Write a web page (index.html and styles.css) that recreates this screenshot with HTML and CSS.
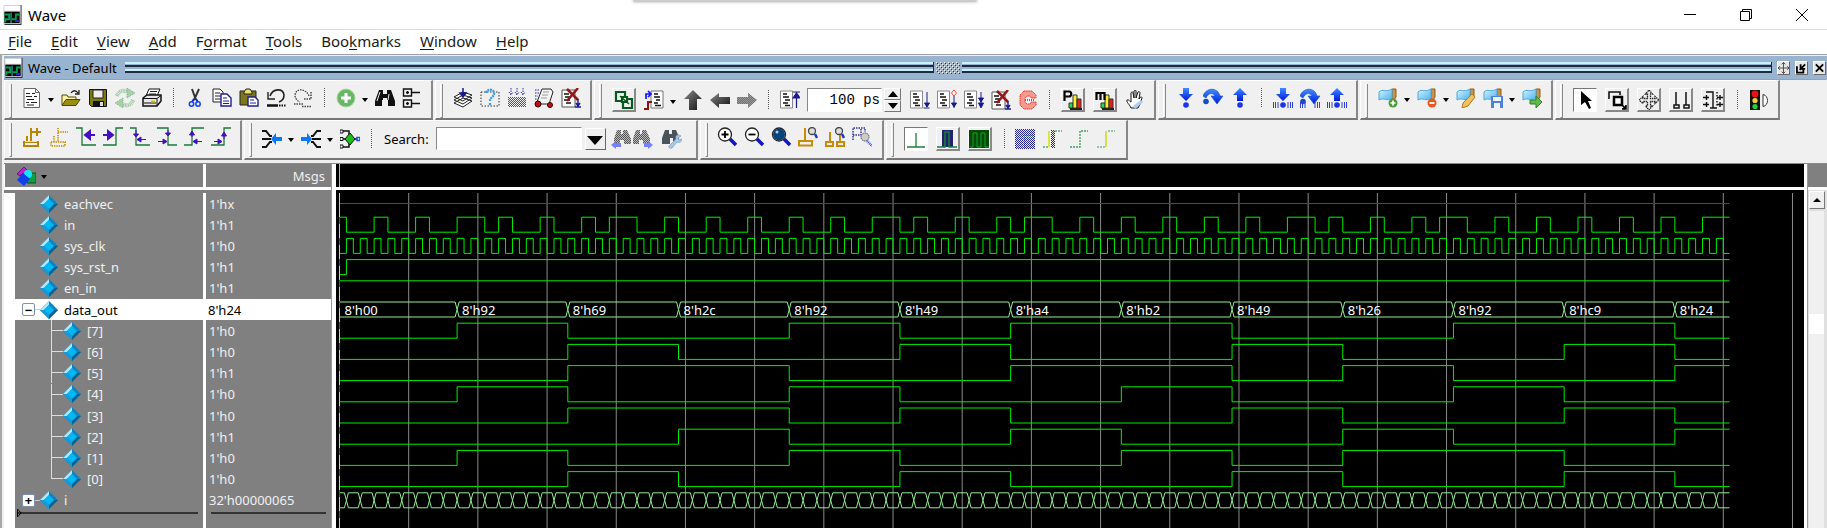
FILE: index.html
```html
<!DOCTYPE html>
<html lang="en">
  <head>
    <meta charset="UTF-8" />
    <meta name="viewport" content="width=device-width, initial-scale=1.0" />
    <title>Wave</title>
    <link rel="stylesheet" href="styles.css">
  </head>
  <body>
    <svg class="sprite" aria-hidden="true">
      <defs>
        <pattern id="dots" width="2" height="2" patternUnits="userSpaceOnUse"><path d="M0 0h1v1H0zM1 1h1v1H1z" fill="#555" /></pattern>
        <pattern id="bluedots" width="2" height="2" patternUnits="userSpaceOnUse"><path d="M0 0h1v1H0zM1 1h1v1H1z" fill="#22228a" /></pattern>
        <pattern id="gripdots" width="4" height="4" patternUnits="userSpaceOnUse"><path d="M0 0h1v1H0zM2 2h1v1H2z" fill="#fff" /><path d="M1 1h1v1H1zM3 3h1v1H3z" fill="#26384c" /></pattern>
        <linearGradient id="steel" x1="0" x2="1" y1="0" y2="1"><stop offset="0" stop-color="#888" /><stop offset="1" stop-color="#111" /></linearGradient>
        <linearGradient id="azure" x1="0" x2="0" y1="0" y2="1"><stop offset="0" stop-color="#3f8cff" /><stop offset="1" stop-color="#0018e0" /></linearGradient>
        <linearGradient id="flagfill" x1="0" x2="1" y1="0" y2="1"><stop offset="0" stop-color="#d8f2ff" /><stop offset="1" stop-color="#4bb4ea" /></linearGradient>
      </defs>
      <symbol id="app" viewBox="0 0 19 21"><path d="M0 0h18v20H0z" fill="#d0d0d0" /><path d="M1 1h17v5H1z" fill="#fff" /><path d="M18 0h1v21H1v-1h17z" fill="#333" /><path d="M1 7h16v12H1z" fill="#000" /><path d="M1 10h5v5H2v3M9 15h4v-5h4" fill="none" stroke="#00a050" stroke-width="2" /><path d="M8 8v11" stroke="#30d0d0" /><path d="M12 17h5" stroke="#4020d0" stroke-width="2" /></symbol>
      <symbol id="page" viewBox="0 0 20 20"><path d="M2 .5h11.500l4 4v15H2z" fill="#fff" stroke="#666" /><path d="M13.500 .5v4h4" fill="none" stroke="#666" /><path d="M4 5.500h4M10 5.500h3M4 8.500h6M12 8.500h3M5 11.500h7M4 14.500h3M9 14.500h6M5 17h7" stroke="#222" /></symbol>
      <symbol id="folder" viewBox="0 0 20 20"><path d="M1 17V7h5l1 2h8v3" fill="#fff2a0" stroke="#504800" /><path d="M1 17.500l4-6h14l-4 6z" fill="#9a9010" stroke="#504800" /><path d="M10 5c2-3 5-3 7 0M18 2v4h-4" fill="none" stroke="#222" stroke-width="1.300" /></symbol>
      <symbol id="save" viewBox="0 0 20 20"><path d="M1.500 1.500h17v17h-15l-2-2z" fill="#7a7a10" stroke="#111" /><path d="M5 2h10v8H5z" fill="#eee" stroke="#222" /><path d="M5 13h11v5H5z" fill="#111" /><path d="M12 14h3v4h-3z" fill="#ddd" /></symbol>
      <symbol id="refresh" viewBox="0 0 20 20" fill="none"><path d="M2 8c2-6 7-6 11-4M18 12c-2 6-7 6-11 4" stroke="#9fc8a4" stroke-width="4" stroke-dasharray="1 .6" /><path d="M12 0l8 5-8 5zM8 10l-8 5 8 5z" fill="#a8cfac" stroke="#80b488" stroke-dasharray="1 1" /></symbol>
      <symbol id="print" viewBox="0 0 20 20"><path d="M7 1h11l-3 7H4z" fill="#fff" stroke="#111" /><path d="M8 3.500h7M7 6h7" stroke="#222" /><path d="M1 10l4-3h14v6l-4 5H1z" fill="#e8e8e8" stroke="#111" stroke-width="1.500" /><path d="M1 10.500h14l4-3M15 11v7M2 15h12" stroke="#111" fill="none" /><path d="M9 13.500h4" stroke="#d0c000" stroke-width="2" /></symbol>
      <symbol id="cut" viewBox="0 0 20 20"><path d="M7 1l4 11M14 1L9 12" stroke="#333" stroke-width="2" /><path d="M9 11l-2 3M11 11l2 3" stroke="#0030d0" stroke-width="2" /><circle cx="6.500" cy="16" r="2.200" fill="none" stroke="#1040ff" stroke-width="1.500" /><circle cx="13" cy="16" r="2.200" fill="none" stroke="#1040ff" stroke-width="1.500" /></symbol>
      <symbol id="copy" viewBox="0 0 20 20"><path d="M1 1h7l3 3v10H1z" fill="#fff" stroke="#222" /><path d="M3 5h5M3 8h6M3 11h6" stroke="#222" /><path d="M9 6h6l4 4v8H9z" fill="#fff" stroke="#202090" stroke-width="1.400" /><path d="M11 10h4M11 13h6M11 15.500h6" stroke="#202090" /></symbol>
      <symbol id="paste" viewBox="0 0 20 20"><path d="M1 3h16v14H1z" fill="#7d761a" stroke="#222" /><path d="M5 4l2-3h4l2 3v2H5z" fill="#e8e070" stroke="#222" /><path d="M9 9h7l3 3v6H9z" fill="#fff" stroke="#202090" stroke-width="1.400" /><path d="M11 12h4M11 15h6" stroke="#202090" /></symbol>
      <symbol id="undo" viewBox="0 0 20 20"><path d="M4 8c3-8 13-8 14-1 0 3-2 6-5 7" fill="none" stroke="#222" stroke-width="1.600" /><path d="M2 4v7h7" fill="none" stroke="#222" stroke-width="1.400" /><path d="M1 17.500h11" stroke="#111" stroke-width="2.500" /><path d="M13 17.500h7" stroke="#111" stroke-width="2" stroke-dasharray="1.500 1" /></symbol>
      <symbol id="redo" viewBox="0 0 20 20" fill="none" stroke="#444" stroke-dasharray="1.500 1"><path d="M16 8C13 0 3 0 2 7c0 3 2 6 5 7" stroke-width="1.300" /><path d="M18 4v7h-7" stroke-width="1.500" /><path d="M1 16h9M9 18.500h10" stroke-width="1.500" /></symbol>
      <symbol id="plus" viewBox="0 0 20 20"><circle cx="10" cy="10" r="9" fill="#69b765" stroke="#a6d8a0" /><path d="M10 5v10M5 10h10" stroke="#fff" stroke-width="3" /></symbol>
      <symbol id="binoculars" viewBox="0 0 20 20"><path d="M4 2h4v4h4V2h4l4 11v5h-7v-6h-1v-2H8v2H7v6H0v-5z" fill="#111" /><path d="M5 4L2 13M14 6l-1 6" stroke="#eee" /></symbol>
      <symbol id="expand" viewBox="0 0 20 20" fill="none" stroke="#111" stroke-width="1.400"><path d="M1.500 1h8v7h-8zM1.500 12h8v7h-8zM10 4.500h8M10 15.500h8M5.500 3v3M4 4.500h3M5.500 14v3M4 15.500h3" /></symbol>

      <symbol id="compile" viewBox="0 0 20 20"><path d="M1 15l9 4 9-6-9-3zM1 12l9 4 9-6-9-3zM1 9l9 4 9-6-9-3z" fill="#fff" stroke="#222" /><path d="M10 0v8M7 5l3 4 3-4z" fill="#1a1a90" stroke="#1a1a90" stroke-width="1.500" /></symbol>
      <symbol id="compilehelp" viewBox="0 0 20 20"><path d="M1 4h18v14H1z" fill="none" stroke="#333" stroke-dasharray="1.500 1.500" /><path d="M6 5c1-5 9-4 8 1 0 3-4 3-4 7M10 15v3" fill="none" stroke="#3d9ee8" stroke-width="2.300" stroke-dasharray="2 .7" /></symbol>
      <symbol id="compileall" viewBox="0 0 20 20"><path d="M1 9h18v10H1z" fill="url(#dots)" /><path d="M4 0v6M10 0v6M16 0v6M2 4l2 3 2-3M8 4l2 3 2-3M14 4l2 3 2-3" stroke="#3030a0" fill="none" stroke-dasharray="1.500 1" /></symbol>
      <symbol id="simulate" viewBox="0 0 20 20"><path d="M8 1h9l2 3-4 12H6l-3-2z" fill="#f4f4f4" stroke="#222" /><path d="M1 2h5M1 5h4M1 8h3M1 11h2" stroke="#2222a0" stroke-dasharray="1.500 1" /><circle cx="4" cy="16" r="3" fill="#c01010" stroke="#400" /><circle cx="16" cy="17" r="2.500" fill="#c01010" stroke="#400" /><path d="M9 4h6M8 7h6M7 10h6" stroke="#999" /></symbol>
      <symbol id="break" viewBox="0 0 20 20"><path d="M1 2h13v17H1z" fill="#fff" stroke="#555" /><path d="M3 6h5M4 9h6M3 12h6M5 15h5" stroke="#111" stroke-width="1.500" /><path d="M6 1l11 11M17 0L6 13" stroke="#991515" stroke-width="2.500" /><path d="M17 11v7M14 19h6M15 15l2 3 2-3" stroke="#1a1a90" fill="none" stroke-width="1.400" /></symbol>

      <symbol id="link" viewBox="0 0 20 20" fill="none" stroke="#075a1b" stroke-width="2.200"><path d="M7 11H2V2h9v4M8 7h5v5H8zM13 9h5v9H9v-5" /><path d="M6 6l9 8" stroke-width="1.500" /></symbol>
      <symbol id="restart" viewBox="0 0 20 20"><path d="M7 1h12v17H7z" fill="#fff" stroke="#777" /><path d="M10 4h4M10 7h6M12 10h4M10 13h4M11 15.500h6" stroke="#111" stroke-width="1.300" /><path d="M2 9V4h4M4 1l3 3-3 3" fill="none" stroke="#1414ff" stroke-width="1.700" /><path d="M0 19h4v-7h4" fill="none" stroke="#901010" stroke-width="2" /></symbol>
      <symbol id="up" viewBox="0 0 20 20"><path d="M10 0l9 9h-5v11H6V9H1z" fill="url(#steel)" /></symbol>
      <symbol id="left" viewBox="0 0 20 20"><path d="M0 10l9-7v4h11v7H9v4z" fill="url(#steel)" /></symbol>
      <symbol id="right" viewBox="0 0 20 20"><path d="M20 10l-9-7v4H0v7h11v4z" fill="#999" /><path d="M20 10l-9-7v4H0v7h11v4z" fill="url(#dots)" opacity=".6" /></symbol>
      <symbol id="list" viewBox="0 0 20 20"><path d="M.5 1h12v17H.5z" fill="#fff" stroke="#888" /><path d="M3 4h4M3 7h6M5 10h5M3 13h5M5 15.500h5" stroke="#111" stroke-width="1.300" /></symbol>
      <symbol id="gototop" viewBox="0 0 20 20"><use href="#list" /><path d="M16.500 2v16M13 2h7M13 8l3.500-5L20 8zM13 8h7" stroke="#1a1a90" fill="#1a1a90" stroke-width="1.200" /></symbol>
      <symbol id="run" viewBox="0 0 20 20"><use href="#list" /><path d="M17 2v15M13.500 18h6M14.500 13l2.500 4 2.500-4z" stroke="#1a1a90" fill="#1a1a90" /></symbol>
      <symbol id="continue" viewBox="0 0 20 20"><use href="#list" /><path d="M17 6v12M14.500 13l2.500 4 2.500-4z" stroke="#1a1a90" fill="#1a1a90" /><path d="M17 0l2.500 3L17 6l-2.500-3z" fill="#fff" stroke="#ff4030" /></symbol>
      <symbol id="runall" viewBox="0 0 20 20"><use href="#list" /><path d="M17 2v15M14.500 8l2.500 4 2.500-4zM14.500 13l2.500 5 2.500-5z" stroke="#1a1a90" fill="#1a1a90" /></symbol>
      <symbol id="cstop" viewBox="0 0 20 20"><path d="M6 1h8l4 4v3h-5l-1-2H9L7 8v4l2 2h3l1-2h5v3l-4 4H6l-4-4V5z" fill="#f49a90" stroke="#ee3020" stroke-dasharray="1.500 .7" /><path d="M7 10h10" stroke="#ee4030" stroke-width="2" stroke-dasharray="1 1" /></symbol>
      <symbol id="chart" viewBox="0 0 20 20"><path d="M6 13h4v5H6z" fill="#20e040" stroke="#333" /><path d="M10 5h4v13h-4z" fill="#ffee30" stroke="#333" /><path d="M14 9h4v9h-4z" fill="#e02020" stroke="#333" /><path d="M7 19h12" stroke="#222" stroke-width="2" /></symbol>
      <symbol id="profile" viewBox="0 0 20 20"><use href="#chart" /><path d="M1.500 11V1.500H6c3 0 3 5 0 5H2" fill="none" stroke="#000" stroke-width="2.200" /></symbol>
      <symbol id="memory" viewBox="0 0 20 20"><use href="#chart" /><path d="M1.500 10V3h8v7M5.500 3v7" fill="none" stroke="#000" stroke-width="2.200" /></symbol>
      <symbol id="hand" viewBox="0 0 20 20"><path d="M6 18c-1-3-5-6-4-8 2-1 3 2 4 2V3c1-2 2-1 2 0l1 5V1c1-1 2-1 2 0v7l2-6c1-1 2 0 2 1l-1 6c2-3 3-2 3-1l-2 6-2 4z" fill="#fff" stroke="#111" /><path d="M8 16l8-6 2 2-8 7z" fill="#a8ccf4" /></symbol>

      <symbol id="into" viewBox="0 0 20 20"><path d="M7 0h6v6h4l-7 7-7-7h4z" fill="url(#azure)" /><circle cx="10" cy="17" r="2.800" fill="#1733f0" /></symbol>
      <symbol id="over" viewBox="0 0 20 20"><path d="M0 8C3-1 15-1 17 8h3l-6 8-6-8h4C10 4 5 5 3 10z" fill="url(#azure)" stroke="#0b50b8" stroke-width=".6" /><circle cx="3" cy="13.500" r="2.800" fill="#114fc0" /></symbol>
      <symbol id="out" viewBox="0 0 20 20"><path d="M7 13h6V7h4l-7-7-7 7h4z" fill="url(#azure)" /><circle cx="10" cy="17" r="2.800" fill="#1733f0" /></symbol>
      <symbol id="ticks" viewBox="0 0 20 20"><path d="M2.500 14v6M5 14v6M15 14v6M17.500 14v6M19.500 14v6M.5 14v6" stroke="#3040d8" /></symbol>

      <symbol id="flag" viewBox="0 0 20 20"><path d="M14 1h4v8l-4 6z" fill="#c8924a" stroke="#8a5a20" /><path d="M1 4c4-4 6 1 13-3v9c-5 4-8-1-13 2z" fill="url(#flagfill)" stroke="#4ca8da" /></symbol>
      <symbol id="flagadd" viewBox="0 0 20 20"><use href="#flag" /><circle cx="15" cy="15" r="4.500" fill="#4f9a3c" /><path d="M15 12.500v5M12.500 15h5" stroke="#fff" stroke-width="1.700" /></symbol>
      <symbol id="flagdel" viewBox="0 0 20 20"><use href="#flag" /><circle cx="15" cy="15" r="4.500" fill="#e8581c" /><path d="M12.500 15h5" stroke="#fff" stroke-width="1.800" /></symbol>
      <symbol id="flagedit" viewBox="0 0 20 20"><use href="#flag" /><path d="M16 6l3 3-7 9-6 2 1-5z" fill="#f0c15c" stroke="#b07a20" /></symbol>
      <symbol id="flagsave" viewBox="0 0 20 20"><use href="#flag" /><path d="M8 8h12v12H8z" fill="#4c82d8" /><path d="M10 9h8v4h-8zM11 15h6v5h-6z" fill="#eef4ff" /></symbol>
      <symbol id="flaggo" viewBox="0 0 20 20"><use href="#flag" /><path d="M8 12h6V8l6 6-6 6v-4H8z" fill="#62b94c" stroke="#34802a" /></symbol>

      <symbol id="pointer" viewBox="0 0 20 20"><path d="M6 1v14l4-3 4 7 2-1-3-7h4z" fill="#000" /></symbol>
      <symbol id="region" viewBox="0 0 20 20"><path d="M2 9V2h11v3" fill="none" stroke="#111" stroke-width="1.600" /><path d="M7 7h8v8H7z" fill="#fff" stroke="#000" stroke-width="2.500" /><path d="M15 15l4 4M19 15v4h-4" stroke="#000" stroke-width="1.500" /></symbol>
      <symbol id="move" viewBox="0 0 20 20" fill="none" stroke="#222" stroke-dasharray="1.500 .7" stroke-width="1.300"><path d="M10 0l3.500 4h-2v4.500h4.500v-2l4 3.500-4 3.500v-2h-4.500V16h2L10 20l-3.500-4h2v-4.500H4v2L0 10l4-3.500v2h4.500V4h-2z" /></symbol>
      <symbol id="cursors" viewBox="0 0 20 20" fill="none" stroke="#111" stroke-width="1.500"><path d="M5 2v13M15 2v13M3 15h5v3H3zM13 15h5v3h-5z" /></symbol>
      <symbol id="edges" viewBox="0 0 20 20" fill="none" stroke="#111" stroke-width="1.400"><path d="M3 2h7v16h4M10 18H7" /><path d="M14 2v15" stroke-dasharray="1.500 1.500" /><path d="M0 7.500h6M3.500 5v5M0 14.500h6M3.500 12v5M14 7.500h6M17 5v5M14 14.500h6M17 12v5" /></symbol>
      <symbol id="traffic" viewBox="0 0 20 20"><path d="M1 0h10v20H1z" fill="#111" /><circle cx="6" cy="4" r="3.400" fill="#f01010" /><circle cx="6" cy="10.500" r="2.600" fill="#e8d040" /><circle cx="6" cy="16.500" r="2.600" fill="#20d040" /><path d="M14 4.500c6 1 6 11 0 12z" fill="#fff" stroke="#333" /></symbol>

      <symbol id="cursoradd" viewBox="0 0 20 20"><path d="M2 15h14v4H2zM9 1v14M9 5h10M15 1v8M5 9v6" fill="none" stroke="#b88606" stroke-width="2" /><path d="M3 14.500h12" stroke="#ffe060" /></symbol>
      <symbol id="cursordel" viewBox="0 0 20 20"><path d="M2 15h14v4H2zM9 1v14M9 5h10M5 9v6" fill="none" stroke="#c8a030" stroke-width="2" stroke-dasharray="1.300 1" /></symbol>
      <symbol id="prevtrans" viewBox="0 0 20 20"><path d="M0 1h6v17h14" fill="none" stroke="#167a34" stroke-width="1.300" /><path d="M19 8H12M14 4L9 8l5 4z" fill="#4210c0" stroke="#4210c0" stroke-width="2" /></symbol>
      <symbol id="nexttrans" viewBox="0 0 20 20"><path d="M0 18h13V1h7" fill="none" stroke="#167a34" stroke-width="1.300" /><path d="M0 8h7M5 4l5 4-5 4z" fill="#4210c0" stroke="#4210c0" stroke-width="2" /></symbol>
      <symbol id="prevfall" viewBox="0 0 20 20"><path d="M0 1h6v17h14" fill="none" stroke="#167a34" stroke-width="1.300" /><path d="M6 3v5M3.500 7h5L6 10zM16 12.500h-5M11 10v5l-4-2.500z" fill="#4210c0" stroke="#4210c0" /></symbol>
      <symbol id="nextfall" viewBox="0 0 20 20"><path d="M0 1h11v17h9" fill="none" stroke="#167a34" stroke-width="1.300" /><path d="M11 3v4M8.500 6h5L11 9zM1 14.500h6M6 12v5l4-2.500z" fill="#4210c0" stroke="#4210c0" /></symbol>
      <symbol id="prevrise" viewBox="0 0 20 20"><path d="M0 18h8V1h12" fill="none" stroke="#167a34" stroke-width="1.300" /><path d="M8 10V6M5.500 8h5L8 4zM18 14.500h-6M13 12v5l-4-2.500z" fill="#4210c0" stroke="#4210c0" /></symbol>
      <symbol id="nextrise" viewBox="0 0 20 20"><path d="M0 18h13V1h7" fill="none" stroke="#167a34" stroke-width="1.300" /><path d="M13 12V7M10.500 9h5L13 5zM3 14.500h5M7 12v5l4-2.500z" fill="#4210c0" stroke="#4210c0" /></symbol>

      <symbol id="drivers" viewBox="0 0 20 20"><path d="M0 2h4l4 5h2M0 18h4l4-5h2M0 10h9" fill="none" stroke="#111" stroke-width="2" /><path d="M9 10l5-6v4h6v4h-6v4z" fill="#0878f8" /></symbol>
      <symbol id="readers" viewBox="0 0 20 20"><path d="M20 2h-4l-4 5h-2M20 18h-4l-4-5h-2M20 10h-9" fill="none" stroke="#111" stroke-width="2" /><path d="M11 10L6 4v4H0v4h6v4z" fill="#0878f8" /></symbol>
      <symbol id="dataflow" viewBox="0 0 20 20"><path d="M3 2h6v16H3M0 10h19" fill="none" stroke="#111" stroke-width="1.500" /><path d="M0 1h3v3H0zM0 8.500h3v3H0zM0 16h3v3H0z" fill="#fff" stroke="#111" /><path d="M10 4l5 6-5 6-5-6z" fill="#18c018" stroke="#111" /><path d="M17 8.500h3v3h-3z" fill="#fff" stroke="#2040ff" stroke-width="1.500" /></symbol>
      <symbol id="dimbinoc" viewBox="0 0 20 20"><path d="M6 1h4v4h2V1h4l4 9v5h-7v-4h-4v4H3v-5z" fill="#bbb" /><path d="M6 1h4v4h2V1h4l4 9v5h-7v-4h-4v4H3v-5z" fill="url(#dots)" /></symbol>
      <symbol id="findprev" viewBox="0 0 20 20"><use href="#dimbinoc" /><path d="M0 16l5-4v2h5v4H5v2z" fill="#7480ff" /></symbol>
      <symbol id="findnext" viewBox="0 0 20 20"><use href="#dimbinoc" x="-3" /><path d="M20 16l-5-4v2h-4v4h4v2z" fill="#7480ff" /></symbol>
      <symbol id="findopt" viewBox="0 0 20 20"><path d="M3 1h4v4h3V1h4l3 7v5h-6V9H8v6H0V9z" fill="#4a525a" /><path d="M7 17l7-7c-1-4 2-5 5-3l-3 2 1 2 3-1c0 3-3 4-5 3l-5 6c-2 1-4-1-3-2z" fill="#a6c8ee" stroke="#8098b8" stroke-width=".7" /></symbol>

      <symbol id="lens" viewBox="0 0 20 20"><path d="M13 12l6 6" stroke="#1414c8" stroke-width="3.500" /><circle cx="8" cy="7.500" r="6.500" fill="#fff" stroke="#222" stroke-width="1.300" /></symbol>
      <symbol id="zoomin" viewBox="0 0 20 20"><use href="#lens" /><path d="M8 4v7M4.500 7.500h7" stroke="#000" stroke-width="1.800" /></symbol>
      <symbol id="zoomout" viewBox="0 0 20 20"><use href="#lens" /><path d="M4.500 7.500h7" stroke="#000" stroke-width="1.800" /></symbol>
      <symbol id="zoomfull" viewBox="0 0 20 20"><use href="#lens" /><circle cx="8" cy="7.500" r="6" fill="#08437a" /><circle cx="6" cy="5" r="1.500" fill="#a8d0f0" /></symbol>
      <symbol id="zoomcursor" viewBox="0 0 20 20"><path d="M1 14h13v4.500H1zM7 1v13" fill="none" stroke="#c88c08" stroke-width="2" /><circle cx="14" cy="4" r="3.500" fill="#ddd" stroke="#444" stroke-width="1.300" /><path d="M17 7l2 4" stroke="#2030d8" stroke-width="2.500" /></symbol>
      <symbol id="zoomtwo" viewBox="0 0 20 20"><path d="M1 15h7v4H1zM12 15h7v4h-7zM5 5v10M15 7v8" fill="none" stroke="#c88c08" stroke-width="2" /><circle cx="14" cy="4" r="3.500" fill="#ddd" stroke="#444" stroke-width="1.300" /><path d="M17 7l2 4" stroke="#2030d8" stroke-width="2.500" /></symbol>
      <symbol id="zoomarea" viewBox="0 0 20 20"><path d="M1 13V1h12v4M1 8h8V1" fill="none" stroke="#3030a0" stroke-width="1.500" stroke-dasharray="1.500 1" /><circle cx="13" cy="10" r="4" fill="#ccc" stroke="#555" stroke-dasharray="1.500 .5" /><path d="M15 14l5 5" stroke="#4858f0" stroke-width="2.500" stroke-dasharray="1 .7" /></symbol>

      <symbol id="glitch" viewBox="0 0 20 20"><path d="M1 18h18M10 4v14" stroke="#188038" stroke-width="1.300" /></symbol>
      <symbol id="pulse" viewBox="0 0 20 20"><path d="M5 1h11v17H5z" fill="#22226e" /><path d="M0 18h8V3h4v15h8" fill="none" stroke="#188038" stroke-width="1.500" /></symbol>
      <symbol id="clockfull" viewBox="0 0 20 20"><path d="M0 1h20v18H0z" fill="#064a06" /><path d="M1 18h3V4h4v14h4V4h4v14h4" fill="none" stroke="#14a030" /></symbol>
      <symbol id="dimfull" viewBox="0 0 20 20"><path d="M0 0h20v20H0z" fill="url(#bluedots)" /><path d="M9 19V7h10" stroke="#40a860" fill="none" stroke-dasharray="1 1" /></symbol>
      <symbol id="dimleft" viewBox="0 0 20 20"><path d="M9 1h4v18H9z" fill="url(#bluedots)" /><path d="M1 18h6" stroke="#188038" stroke-dasharray="2 1" /><path d="M7 18V2" stroke="#d8e010" stroke-width="1.500" /><path d="M13 2h7" stroke="#188038" stroke-dasharray="2 1" /></symbol>
      <symbol id="dimrise" viewBox="0 0 20 20"><path d="M1 18h10V2h8" fill="none" stroke="#38a058" stroke-width="1.300" stroke-dasharray="2 1" /></symbol>
      <symbol id="dimyellow" viewBox="0 0 20 20"><path d="M1 18h9M12 2h7" stroke="#38a058" stroke-dasharray="2 1" /><path d="M10 18V2" stroke="#c8d820" stroke-width="1.500" /></symbol>

      <symbol id="gem" viewBox="0 0 18 18"><path d="M9 0l9 9-9 9-9-9z" fill="#0b83c4" /><path d="M9 0L0 9h4l5-5z" fill="#a8e8ff" /><path d="M9 18l9-9h-4l-5 5z" fill="#05618f" /><path d="M0 9l9 9v-4L4 9z" fill="#1a98d8" /><path d="M9 4l5 5-5 5-5-5z" fill="#00b8f4" /></symbol>
    </svg>

    <header class="titlebar">
      <svg class="app-icon"><use href="#app" /></svg>
      <h1>Wave</h1>
      <div class="window-buttons">
        <button aria-label="Minimize"><svg viewBox="0 0 12 12"><path d="M0 5.500h12" /></svg></button>
        <button aria-label="Restore"><svg viewBox="0 0 12 12"><path d="M.5 2.500h9v9h-9zM2.500 2.500v-2h9v9h-2" /></svg></button>
        <button aria-label="Close"><svg viewBox="0 0 12 12"><path d="M0 0l12 12M12 0L0 12" /></svg></button>
      </div>
      <div class="drop-edge"></div>
    </header>

    <nav class="menu">
      <a href="#"><u>F</u>ile</a>
      <a href="#"><u>E</u>dit</a>
      <a href="#"><u>V</u>iew</a>
      <a href="#"><u>A</u>dd</a>
      <a href="#">F<u>o</u>rmat</a>
      <a href="#"><u>T</u>ools</a>
      <a href="#">Boo<u>k</u>marks</a>
      <a href="#"><u>W</u>indow</a>
      <a href="#"><u>H</u>elp</a>
    </nav>

    <main class="dock">
      <div class="dock-title">
        <svg class="app-icon"><use href="#app" /></svg>
        <h2>Wave - Default</h2>
        <span class="rail"></span>
        <svg class="grip-dots"><rect width="24" height="12" fill="url(#gripdots)" /></svg>
        <span class="rail"></span>
        <div class="dock-buttons">
          <button aria-label="Move"><svg class="thin" viewBox="0 0 12 12"><path d="M6 0v12M0 6h12M4 2l2-2 2 2M4 10l2 2 2-2M2 4L0 6l2 2M10 4l2 2-2 2" /></svg></button>
          <button aria-label="Undock"><svg viewBox="0 0 12 12"><path d="M1 4v7h7V7M4 8l6-6M5 2v5h5" /></svg></button>
          <button aria-label="Close pane"><svg viewBox="0 0 12 12"><path d="M2 2l8 8M10 2l-8 8" /></svg></button>
        </div>
      </div>

      <div class="toolrow">
        <div class="bar"><div class="tools">
          <button class="tool" aria-label="New"><svg><use href="#page" /></svg></button>
          <button class="caret" aria-label="New options"></button>
          <button class="tool" aria-label="Open"><svg><use href="#folder" /></svg></button>
          <button class="tool" aria-label="Save"><svg><use href="#save" /></svg></button>
          <button class="tool" aria-label="Reload"><svg><use href="#refresh" /></svg></button>
          <button class="tool" aria-label="Print"><svg><use href="#print" /></svg></button>
          <span class="sep"></span>
          <button class="tool" aria-label="Cut"><svg><use href="#cut" /></svg></button>
          <button class="tool" aria-label="Copy"><svg><use href="#copy" /></svg></button>
          <button class="tool" aria-label="Paste"><svg><use href="#paste" /></svg></button>
          <button class="tool" aria-label="Undo"><svg><use href="#undo" /></svg></button>
          <button class="tool" aria-label="Redo"><svg><use href="#redo" /></svg></button>
          <span class="sep"></span>
          <button class="tool" aria-label="Add selected"><svg><use href="#plus" /></svg></button>
          <button class="caret" aria-label="Add options"></button>
          <button class="tool" aria-label="Find"><svg><use href="#binoculars" /></svg></button>
          <button class="tool" aria-label="Expand"><svg><use href="#expand" /></svg></button>
        </div></div>

        <div class="bar"><div class="tools">
          <button class="tool" aria-label="Compile"><svg><use href="#compile" /></svg></button>
          <button class="tool" aria-label="Compile out of date"><svg><use href="#compilehelp" /></svg></button>
          <button class="tool" aria-label="Compile all"><svg><use href="#compileall" /></svg></button>
          <button class="tool" aria-label="Simulate"><svg><use href="#simulate" /></svg></button>
          <button class="tool" aria-label="Break"><svg><use href="#break" /></svg></button>
        </div></div>

        <div class="bar"><div class="tools">
          <button class="tool raised" aria-label="Environment"><svg><use href="#link" /></svg></button>
          <button class="tool" aria-label="Restart"><svg><use href="#restart" /></svg></button>
          <button class="caret" aria-label="Restart options"></button>
          <button class="tool" aria-label="Up"><svg><use href="#up" /></svg></button>
          <button class="tool" aria-label="Back"><svg><use href="#left" /></svg></button>
          <button class="tool" aria-label="Forward"><svg><use href="#right" /></svg></button>
          <span class="sep"></span>
          <button class="tool" aria-label="Rewind"><svg><use href="#gototop" /></svg></button>
          <input class="run-length" type="text" value="100 ps" aria-label="Run length">
          <div class="spin">
            <button class="spin-up" aria-label="Increase"></button>
            <button class="spin-down" aria-label="Decrease"></button>
          </div>
          <button class="tool" aria-label="Run"><svg><use href="#run" /></svg></button>
          <button class="tool" aria-label="Continue run"><svg><use href="#continue" /></svg></button>
          <button class="tool" aria-label="Run all"><svg><use href="#runall" /></svg></button>
          <button class="tool" aria-label="Stop"><svg><use href="#break" /></svg></button>
          <button class="tool" aria-label="C interface"><svg><use href="#cstop" /></svg></button>
          <span class="sep"></span>
          <button class="tool raised" aria-label="Performance"><svg><use href="#profile" /></svg></button>
          <button class="tool raised" aria-label="Memory"><svg><use href="#memory" /></svg></button>
          <button class="tool" aria-label="Edit"><svg><use href="#hand" /></svg></button>
        </div></div>

        <div class="bar"><div class="tools">
          <button class="tool" aria-label="Step into"><svg><use href="#into" /></svg></button>
          <button class="tool" aria-label="Step over"><svg><use href="#over" /></svg></button>
          <button class="tool" aria-label="Step out"><svg><use href="#out" /></svg></button>
          <span class="sep"></span>
          <button class="tool" aria-label="Step into current"><svg><use href="#into" /><use href="#ticks" /></svg></button>
          <button class="tool" aria-label="Step over current"><svg><use href="#over" /><use href="#ticks" /></svg></button>
          <button class="tool" aria-label="Step out current"><svg><use href="#out" /><use href="#ticks" /></svg></button>
        </div></div>

        <div class="bar"><div class="tools">
          <button class="tool" aria-label="Add bookmark"><svg><use href="#flagadd" /></svg></button>
          <button class="caret" aria-label="Add bookmark options"></button>
          <button class="tool" aria-label="Delete bookmark"><svg><use href="#flagdel" /></svg></button>
          <button class="caret" aria-label="Delete bookmark options"></button>
          <button class="tool" aria-label="Manage bookmarks"><svg><use href="#flagedit" /></svg></button>
          <button class="tool" aria-label="Save bookmarks"><svg><use href="#flagsave" /></svg></button>
          <button class="caret" aria-label="Save bookmark options"></button>
          <button class="tool" aria-label="Go to bookmark"><svg><use href="#flaggo" /></svg></button>
        </div></div>

        <div class="bar"><div class="tools">
          <button class="tool raised pressed" aria-label="Select mode"><svg><use href="#pointer" /></svg></button>
          <button class="tool raised" aria-label="Zoom mode"><svg><use href="#region" /></svg></button>
          <button class="tool raised" aria-label="Pan mode"><svg><use href="#move" /></svg></button>
          <button class="tool raised" aria-label="Two cursor mode"><svg><use href="#cursors" /></svg></button>
          <button class="tool raised" aria-label="Edit mode"><svg><use href="#edges" /></svg></button>
          <span class="sep"></span>
          <button class="tool" aria-label="Stop drawing"><svg><use href="#traffic" /></svg></button>
        </div></div>
      </div>

      <div class="toolrow lower">
        <div class="bar"><div class="tools">
          <button class="tool" aria-label="Insert cursor"><svg><use href="#cursoradd" /></svg></button>
          <button class="tool" aria-label="Delete cursor"><svg><use href="#cursordel" /></svg></button>
          <button class="tool" aria-label="Previous transition"><svg><use href="#prevtrans" /></svg></button>
          <button class="tool" aria-label="Next transition"><svg><use href="#nexttrans" /></svg></button>
          <button class="tool" aria-label="Previous falling edge"><svg><use href="#prevfall" /></svg></button>
          <button class="tool" aria-label="Next falling edge"><svg><use href="#nextfall" /></svg></button>
          <button class="tool" aria-label="Previous rising edge"><svg><use href="#prevrise" /></svg></button>
          <button class="tool" aria-label="Next rising edge"><svg><use href="#nextrise" /></svg></button>
        </div></div>

        <div class="bar"><div class="tools">
          <button class="tool" aria-label="Drivers"><svg><use href="#drivers" /></svg></button>
          <button class="caret" aria-label="Driver options"></button>
          <button class="tool" aria-label="Readers"><svg><use href="#readers" /></svg></button>
          <button class="caret" aria-label="Reader options"></button>
          <button class="tool" aria-label="Dataflow"><svg><use href="#dataflow" /></svg></button>
          <span class="sep"></span>
          <label for="search">Search:</label>
          <input class="search" id="search" type="text">
          <button class="drop" aria-label="Search history"></button>
          <button class="tool narrow" aria-label="Find previous"><svg><use href="#findprev" /></svg></button>
          <button class="tool narrow" aria-label="Find next"><svg><use href="#findnext" /></svg></button>
          <button class="tool wide" aria-label="Search options"><svg><use href="#findopt" /></svg></button>
        </div></div>

        <div class="bar"><div class="tools">
          <button class="tool" aria-label="Zoom in"><svg><use href="#zoomin" /></svg></button>
          <button class="tool" aria-label="Zoom out"><svg><use href="#zoomout" /></svg></button>
          <button class="tool" aria-label="Zoom full"><svg><use href="#zoomfull" /></svg></button>
          <button class="tool" aria-label="Zoom on cursor"><svg><use href="#zoomcursor" /></svg></button>
          <button class="tool" aria-label="Zoom between cursors"><svg><use href="#zoomtwo" /></svg></button>
          <button class="tool" aria-label="Zoom other window"><svg><use href="#zoomarea" /></svg></button>
        </div></div>

        <div class="bar"><div class="tools">
          <button class="tool raised pressed" aria-label="Expanded time off"><svg><use href="#glitch" /></svg></button>
          <button class="tool raised" aria-label="Expanded time deltas"><svg><use href="#pulse" /></svg></button>
          <button class="tool raised" aria-label="Expanded time events"><svg><use href="#clockfull" /></svg></button>
          <span class="sep"></span>
          <button class="tool" aria-label="Expand all time"><svg><use href="#dimfull" /></svg></button>
          <button class="tool" aria-label="Expand time at cursor"><svg><use href="#dimleft" /></svg></button>
          <button class="tool" aria-label="Collapse all time"><svg><use href="#dimrise" /></svg></button>
          <button class="tool" aria-label="Collapse time at cursor"><svg><use href="#dimyellow" /></svg></button>
        </div></div>
      </div>

      <div class="viewer">
        <table class="signals">
          <thead>
            <tr>
              <th>
                <button class="kinds" aria-label="Signal filter">
                  <svg viewBox="0 0 20 20"><path d="M1 8l7-7 6 6-4 2-3-2-3 3z" fill="#c020d0" stroke="#701080" /><path d="M12 7h8v10h-9z" fill="#10a040" stroke="#085020" /><circle cx="12" cy="8" r="4" fill="#10e8ff" /><path d="M7 7l7 6-6 7-7-6z" fill="#1040e8" /></svg>
                  <span class="arrow"></span>
                </button>
              </th>
              <th class="msgs">Msgs</th>
            </tr>
          </thead>
          <tbody id="signal-rows"></tbody>
          <tfoot>
            <tr>
              <td><div class="insert"><svg viewBox="0 0 5 10"><path d="M.5 1v8L4 5z" /></svg></div></td>
              <td class="value"><div class="insert"></div></td>
            </tr>
          </tfoot>
        </table>

        <div class="waves">
          <div class="ruler"></div>
          <svg class="canvas" id="canvas"></svg>
        </div>

        <div class="scroll">
          <div class="corner"></div>
          <button class="scroll-up" aria-label="Scroll up"><span></span></button>
          <div class="thumb"></div>
          <div class="trough"></div>
          <div class="thumb rest"></div>
        </div>
      </div>
    </main>

    <script>
      var START = 3.5;     // x of time zero
      var PERIOD = 13.838; // one sys_clk period
      var END = 100.45;    // last drawn time, in periods
      var FIRST = 10.5;    // centre of the first row
      var PITCH = 21.2;
      var HALF = 7.5;

      var vectors = [0x00, 0x92, 0x69, 0x2c, 0x92, 0x49, 0xa4, 0xb2, 0x49, 0x26, 0x92, 0xc9, 0x24];

      // clock edges at which "in" toggles
      var inEdges = [
        0, 2, 3, 5, 6, 8, 10, 11, 12, 14, 15, 17, 18, 19, 21, 23, 24, 26, 27, 29, 30,
        32, 33, 35, 36, 38, 40, 41, 42, 44, 45, 47, 48, 49, 51, 53, 54, 56, 57, 59, 60,
        62, 63, 65, 66, 68, 70, 71, 72, 74, 75, 77, 78, 79, 81, 83, 84, 86, 87, 89, 90,
        92, 93, 95, 96, 98,
      ];

      var signals = [
        { name: "eachvec", value: "1'hx" },
        { name: "in", value: "1'h1" },
        { name: "sys_clk", value: "1'h0" },
        { name: "sys_rst_n", value: "1'h1" },
        { name: "en_in", value: "1'h1" },
        { name: "data_out", value: "8'h24", box: "−", selected: true },
      ];
      for (var b = 7; b >= 0; b--) {
        var last = vectors[vectors.length - 1];
        signals.push({ name: "[" + b + "]", value: "1'h" + ((last >> b) & 1), child: true });
      }
      signals.push({ name: "i", value: "32'h00000065", box: "+" });

      function show_rows() {
        var html = "";
        for (var i = 0; i < signals.length; i++) {
          var s = signals[i];
          var lead = "";
          if (s.box) {
            lead = "<button class='box' aria-label='Toggle " + s.name + "'>" + s.box + "</button><span class='stem'></span>";
          }
          if (s.child) {
            lead = "<span class='branch" + (s.name === "[0]" ? " end" : "") + "'></span>";
          }
          html +=
            "<tr" + (s.selected ? " class='selected'" : "") + "><td><div class='sig" +
            (s.box || s.child ? "" : " plain") + "'>" + lead +
            "<svg class='gem'><use href='#gem' /></svg><span>" + s.name + "</span></div></td>" +
            "<td class='value'>" + s.value + "</td></tr>";
        }
        document.getElementById("signal-rows").innerHTML = html;
      }

      function x_at(t) {
        return START + t * PERIOD;
      }

      function path(cls, d) {
        return "<path class='" + cls + "' d='" + d + "' />";
      }

      // square wave that starts at level and toggles at each time
      function digital(row, level, times) {
        var mid = FIRST + row * PITCH;
        var y = level ? mid - HALF : mid + HALF;
        var d = "M" + START + " " + y;
        for (var i = 0; i < times.length; i++) {
          level = !level;
          y = level ? mid - HALF : mid + HALF;
          d += "H" + x_at(times[i]) + "V" + y;
        }
        return path("bit", d + "H" + x_at(END));
      }

      function bus(row, times) {
        var mid = FIRST + row * PITCH;
        var top = mid - HALF;
        var low = mid + HALF;
        var d = "M" + START + " " + top;
        var e = "M" + START + " " + low;
        for (var i = 0; i < times.length; i++) {
          var x = x_at(times[i]);
          d += "H" + (x - 2) + "L" + x + " " + mid + "L" + (x + 2) + " " + top;
          e += "H" + (x - 2) + "L" + x + " " + mid + "L" + (x + 2) + " " + low;
        }
        return path("bus", d + "H" + x_at(END)) + path("bus", e + "H" + x_at(END));
      }

      function draw() {
        var out = "";
        var times = [];
        var i;

        for (i = 5; i <= 105; i += 5) {
          out += path("grid", "M" + x_at(i) + " -3V400");
        }

        out += path("unknown", "M" + START + " " + FIRST + "H" + x_at(END));
        out += digital(1, true, inEdges.map(function (t) { return t + 0.5; }));

        for (i = 1; i <= 200; i++) {
          times.push(i / 2);
        }
        out += digital(2, false, times);
        out += digital(3, false, [0.5]);
        out += digital(4, true, []);

        var changes = [];
        for (i = 1; i < vectors.length; i++) {
          changes.push(i * 8 + 0.5);
        }
        out += bus(5, changes);
        for (i = 0; i < vectors.length; i++) {
          var hex = (vectors[i] < 16 ? "0" : "") + vectors[i].toString(16);
          var x = x_at(i === 0 ? 0 : changes[i - 1]) + 5;
          out += "<text x='" + x + "' y='" + (FIRST + 5 * PITCH + 5) + "'>8'h" + hex + "</text>";
        }

        for (var b = 7; b >= 0; b--) {
          var toggles = [];
          for (i = 1; i < vectors.length; i++) {
            if (((vectors[i] ^ vectors[i - 1]) >> b) & 1) {
              toggles.push(changes[i - 1]);
            }
          }
          out += digital(13 - b, (vectors[0] >> b) & 1, toggles);
        }

        times = [];
        for (i = 0; i < 100; i++) {
          times.push(i + 0.5);
        }
        out += bus(14, times);

        out += path("cursor", "M" + START + " -3V400");
        out += path("cursor-tick", "M" + START + " 24V400");
        document.getElementById("canvas").innerHTML = out;
      }

      show_rows();
      draw();
    </script>
  </body>
</html>
```
FILE: styles.css
```css
*,
*::before {
  box-sizing: border-box;
}

body {
  margin: 0;
  min-height: 100vh;
  display: flex;
  flex-direction: column;
  background: #fff;
  color: #000;
  font-family: "Noto Sans", "Open Sans", sans-serif;
  font-size: 13px;
  overflow: hidden;
}

button {
  margin: 0;
  padding: 0;
  border: none;
  background: none;
  font: inherit;
  color: inherit;
}

h1,
h2 {
  margin: 0;
  font-weight: normal;
}

.sprite {
  position: absolute;
  width: 0;
  height: 0;
}

/* window title */
.titlebar {
  position: relative;
  display: flex;
  align-items: center;
  height: 30px;
  padding-left: 3px;
  border-bottom: 1px solid #dcdcdc;
}

.titlebar h1 {
  margin-left: 6px;
  font-size: 15px;
}

.app-icon {
  flex: none;
  width: 19px;
  height: 20px;
}

.window-buttons {
  display: flex;
  gap: 6px;
  margin-left: auto;
}

.window-buttons button {
  display: flex;
  justify-content: center;
  width: 50px;
}

.window-buttons svg {
  width: 12px;
  height: 12px;
  fill: none;
  stroke: #000;
}

.drop-edge {
  position: absolute;
  top: 0;
  left: 34.7%;
  width: 18.7%;
  height: 1px;
  background: #ccc;
  box-shadow: 0 0 3px 1px #aaa;
}

.menu {
  display: flex;
  align-items: center;
  gap: 19px;
  height: 24px;
  padding: 0 0 3px 8px;
  font-size: 15px;
}

.menu a {
  color: #1a1a1a;
  text-decoration: none;
}

.menu u {
  text-underline-offset: 2px;
}

/* docked pane */
.dock {
  flex: 1;
  display: flex;
  flex-direction: column;
  padding-left: 2px;
  border-top: 1px solid #a0a0a0;
  border-left: 2px solid #a8a8a8;
  background: #f0f0f0;
}

.dock-title {
  display: flex;
  align-items: center;
  height: 24px;
  margin-top: 1px;
  border-bottom: 1px solid #a0a0a0;
  background: #99b4d1;
}

.dock-title h2 {
  margin: 0 8px 0 5px;
  font-size: 13px;
}

.rail {
  flex: 1;
  height: 11px;
  border-right: 1px solid #1c2c3c;
  background: linear-gradient(#c8f0ff 2px, #99b4d1 2px 3px, #1c2c3c 3px 5px, #99b4d1 5px 7px, #c8f0ff 7px 9px, #1c2c3c 9px);
}

.grip-dots {
  flex: none;
  width: 24px;
  height: 12px;
  margin: 0 2px;
}

.dock-buttons {
  display: flex;
  gap: 5px;
  margin: 0 1px 0 5px;
}

.dock-buttons button {
  width: 13px;
  height: 14px;
  border: 1px solid #fff;
  border-right-color: #666;
  border-bottom-color: #666;
  background: #e8e8e8;
}

.dock-buttons svg {
  display: block;
  width: 11px;
  height: 12px;
  fill: none;
  stroke: #000;
  stroke-width: 2;
}

.dock-buttons .thin {
  stroke: #444;
  stroke-width: 1;
}

/* toolbars */
.toolrow {
  display: flex;
  gap: 2px;
  height: 40px;
}

.bar {
  display: flex;
  align-items: flex-start;
  padding: 7px 6px 0 4px;
  border: 1px solid #fff;
  border-right: 2px solid #888;
  border-bottom: 2px solid #777;
}

.lower .bar {
  padding-top: 6px;
}

.bar::before {
  content: "";
  width: 3px;
  height: 34px;
  margin: -4px 6px 0 0;
  border: solid #888;
  border-width: 0 1px 1px 0;
  border-left: 1px solid #fff;
}

.tools {
  display: flex;
  align-items: center;
}

.tool {
  display: flex;
  align-items: center;
  justify-content: center;
  width: 27px;
  height: 20px;
}

.tool svg {
  flex: none;
  width: 20px;
  height: 20px;
}

.tool.raised {
  width: 24px;
  height: 24px;
  margin: 0 4px;
  border: 1px solid #fff;
  border-right: 2px solid #888;
  border-bottom: 2px solid #888;
}

.tool.pressed {
  border: 1px solid #fff;
  border-top-color: #777;
  border-left-color: #777;
  background: #fff;
}

.tool.narrow {
  width: 22px;
}

.tool.wide {
  width: 36px;
}

.caret,
.drop {
  display: flex;
  align-items: center;
  justify-content: center;
  width: 12px;
  height: 20px;
}

.caret::before,
.arrow {
  content: "";
  margin-top: 3px;
  border: 3px solid transparent;
  border-top: 4px solid #000;
  border-bottom: none;
}

.sep {
  width: 16px;
  height: 20px;
  background: linear-gradient(#555 1px, transparent 1px) 8px 0 / 1px 2px repeat-y;
}

.run-length {
  width: 75px;
  height: 24px;
  margin: 0 2px 0 4px;
  padding: 0 1px;
  border: 1px solid #fff;
  border-top-color: #888;
  border-left-color: #888;
  background: #fff;
  font-family: "Liberation Mono", monospace;
  font-size: 14px;
  text-align: right;
}

.spin {
  display: flex;
  flex-direction: column;
  width: 17px;
  margin-right: 5px;
}

.spin button {
  display: flex;
  align-items: center;
  justify-content: center;
  height: 12px;
  border: 1px solid #fff;
  border-right-color: #777;
  border-bottom-color: #777;
}

.spin button::before {
  content: "";
  border: 5px solid transparent;
}

.spin .spin-up::before {
  border-top: none;
  border-bottom: 6px solid #000;
}

.spin .spin-down::before {
  border-bottom: none;
  border-top: 6px solid #000;
}

.tools label {
  margin: 0 7px 0 5px;
}

.search {
  width: 146px;
  height: 23px;
  margin-right: 3px;
  border: 1px solid #fff;
  border-top-color: #888;
  border-left-color: #888;
  background: #fff;
}

.drop {
  width: 21px;
  height: 22px;
  margin-right: 4px;
  border: 1px solid #fff;
  border-right-color: #666;
  border-bottom-color: #666;
}

.drop::before {
  content: "";
  margin-top: 4px;
  border: 8px solid transparent;
  border-top: 9px solid #000;
  border-bottom: none;
}

/* signal list and waves */
.viewer {
  flex: 1;
  display: flex;
  margin-top: 3px;
  border-top: 1px solid #888;
  background: #fff;
}

.signals {
  align-self: flex-start;
  width: 328px;
  border-spacing: 0;
  background: #808080;
  color: #f0f0f0;
  border-right: 1px solid #999;
}

.signals th,
.signals td {
  padding: 0;
  line-height: 18px;
}

.signals th {
  height: 26px;
  border-bottom: 3px solid #fff;
  font-weight: normal;
}

.signals th:first-child,
.signals td:first-child {
  width: 202px;
  border-right: 3px solid #fff;
  border-left: 1px solid #fff;
}

.signals td:first-child {
  border-left-width: 11px;
}

.signals .msgs {
  padding-right: 6px;
  text-align: right;
}

.signals tbody::before {
  content: "";
  display: table-row;
  height: 3px;
}

.signals tbody tr {
  height: 21px;
}

.signals tbody tr:nth-child(5n) {
  height: 22px;
}

.signals .value {
  padding-left: 3px;
}

.signals .selected {
  background: #fff;
  color: #000;
}

.signals .selected .value {
  padding-left: 2px;
}

.kinds {
  display: flex;
  align-items: center;
  gap: 5px;
  padding-left: 11px;
}

.kinds svg {
  width: 20px;
  height: 20px;
}

.sig {
  display: flex;
  align-items: center;
  height: 21px;
  padding-left: 7px;
}

.sig.plain {
  padding-left: 25px;
}

.gem {
  flex: none;
  width: 18px;
  height: 18px;
  margin-right: 6px;
}

.box {
  width: 13px;
  height: 13px;
  border: 1px solid #8090b0;
  border-radius: 2px;
  background: #fff;
  color: #000;
  font-size: 13px;
  font-weight: bold;
  line-height: 10px;
}

.stem {
  width: 5px;
  border-top: 1px solid #ccc;
}

.branch {
  align-self: stretch;
  display: flex;
  align-items: center;
  width: 12px;
  margin-left: 29px;
  border-left: 1px solid #ddd;
}

.branch::before {
  content: "";
  flex: 1;
  border-top: 1px solid #ddd;
}

.branch.end {
  align-self: flex-start;
  align-items: flex-end;
  height: 11px;
}

.signals tfoot td {
  height: 18px;
  vertical-align: top;
}

.insert {
  display: flex;
  align-items: center;
  height: 4px;
  margin: 0 5px 0 2px;
  background: linear-gradient(#333, #333) 0 50% / 100% 2px no-repeat;
}

.insert svg {
  flex: none;
  width: 5px;
  height: 10px;
  overflow: visible;
  fill: none;
  stroke: #000;
}

.waves {
  flex: 1;
  display: flex;
  flex-direction: column;
  margin-left: 4px;
  background: #000;
}

.ruler {
  height: 26px;
  border-bottom: 3px solid #fff;
  background: linear-gradient(#e8c000, #e8c000) 3px 0 / 1px 100% no-repeat;
}

.canvas {
  flex: 1;
  width: 100%;
  min-height: 0;
  padding-top: 3px;
}

.canvas path {
  fill: none;
}

.canvas text {
  fill: #fff;
  font-size: 13px;
}

.canvas .grid {
  stroke: #8a8a8a;
}

.canvas .unknown {
  stroke: #f00;
}

.canvas .bit {
  stroke: #00f000;
}

.canvas .bus {
  stroke: #90ee90;
}

.canvas .cursor {
  stroke: #ffd800;
}

.canvas .cursor-tick {
  stroke: #f01000;
  stroke-dasharray: 7 14;
}

.scroll {
  display: flex;
  flex-direction: column;
  width: 20px;
  margin-left: 3px;
  border-left: 1px solid #999;
  background: #e0e0e0;
}

.corner {
  height: 26px;
  border-bottom: 3px solid #fff;
  background: #808080;
}

.scroll-up {
  display: flex;
  align-items: center;
  justify-content: center;
  height: 18px;
  margin: 1px 2px 2px 1px;
  border: 1px solid #fff;
  border-right-color: #777;
  border-bottom-color: #777;
  background: #f0f0f0;
}

.scroll-up span {
  border: 4px solid transparent;
  border-top: none;
  border-bottom: 4px solid #000;
}

.thumb {
  height: 103px;
  margin: 0 3px 0 1px;
  background: #f0f0f0;
}

.trough {
  height: 20px;
  margin: 0 3px 0 1px;
  background: #fff;
}

.thumb.rest {
  flex: 1;
}
```
